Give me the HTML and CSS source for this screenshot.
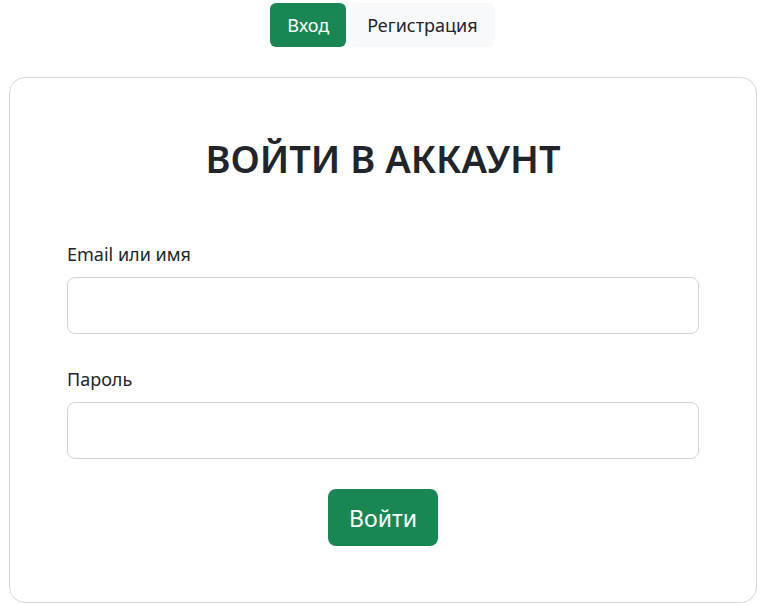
FILE: index.html
```html
<!DOCTYPE html>
<html lang="ru">
<head>
<meta charset="utf-8">
<title>Вход</title>
<link rel="stylesheet" href="styles.css">
</head>
<body>
<div class="tabs">
  <button class="tab tab-active">Вход</button>
  <button class="tab">Регистрация</button>
</div>
<div class="card">
  <h1 class="title">ВОЙТИ В АККАУНТ</h1>
  <form class="form">
    <label class="field">
      <span class="label">Email или имя</span>
      <input class="input" type="text">
    </label>
    <label class="field">
      <span class="label">Пароль</span>
      <input class="input" type="password">
    </label>
    <div class="actions">
      <button type="button" class="submit">Войти</button>
    </div>
  </form>
</div>
</body>
</html>
```
FILE: styles.css
```css
* { box-sizing: border-box; }
html, body { margin: 0; padding: 0; background: #fff; }
body {
  font-family: "Noto Sans", "Open Sans", sans-serif;
  color: #212529;
}
.tabs {
  display: flex;
  justify-content: center;
  gap: 4px;
  padding-top: 3px;
  margin-left: 1px;
}
.tab {
  font-family: inherit;
  font-size: 18px;
  height: 44px;
  padding: 0 17px;
  border: none;
  border-radius: 6px;
  background: #f8f9fa;
  color: #212529;
}
.tab-active {
  background: #198754;
  color: #fff;
}
.card {
  margin: 30px 7px 2px 9px;
  border: 1px solid #d6d6d6;
  border-radius: 16px;
  padding: 56px 57px 56px 57px;
}
.title {
  margin: 0 0 59px;
  text-align: center;
  font-size: 38px;
  font-weight: 600;
  line-height: 48px;
}
.form { display: flex; flex-direction: column; }
.field { display: flex; flex-direction: column; margin-bottom: 32px; }
.label {
  font-size: 18px;
  line-height: 26px;
  margin-bottom: 10px;
}
.input {
  height: 57px;
  border: 1px solid #d0d4da;
  border-radius: 8px;
  font-family: inherit;
  font-size: 17px;
  padding: 0 16px;
}
.field:nth-child(2) { margin-bottom: 30px; }
.actions { display: flex; justify-content: center; }
.submit {
  font-family: inherit;
  font-size: 23px;
  height: 57px;
  width: 110px;
  border: none;
  border-radius: 8px;
  background: #198754;
  color: #fff;
}
```
